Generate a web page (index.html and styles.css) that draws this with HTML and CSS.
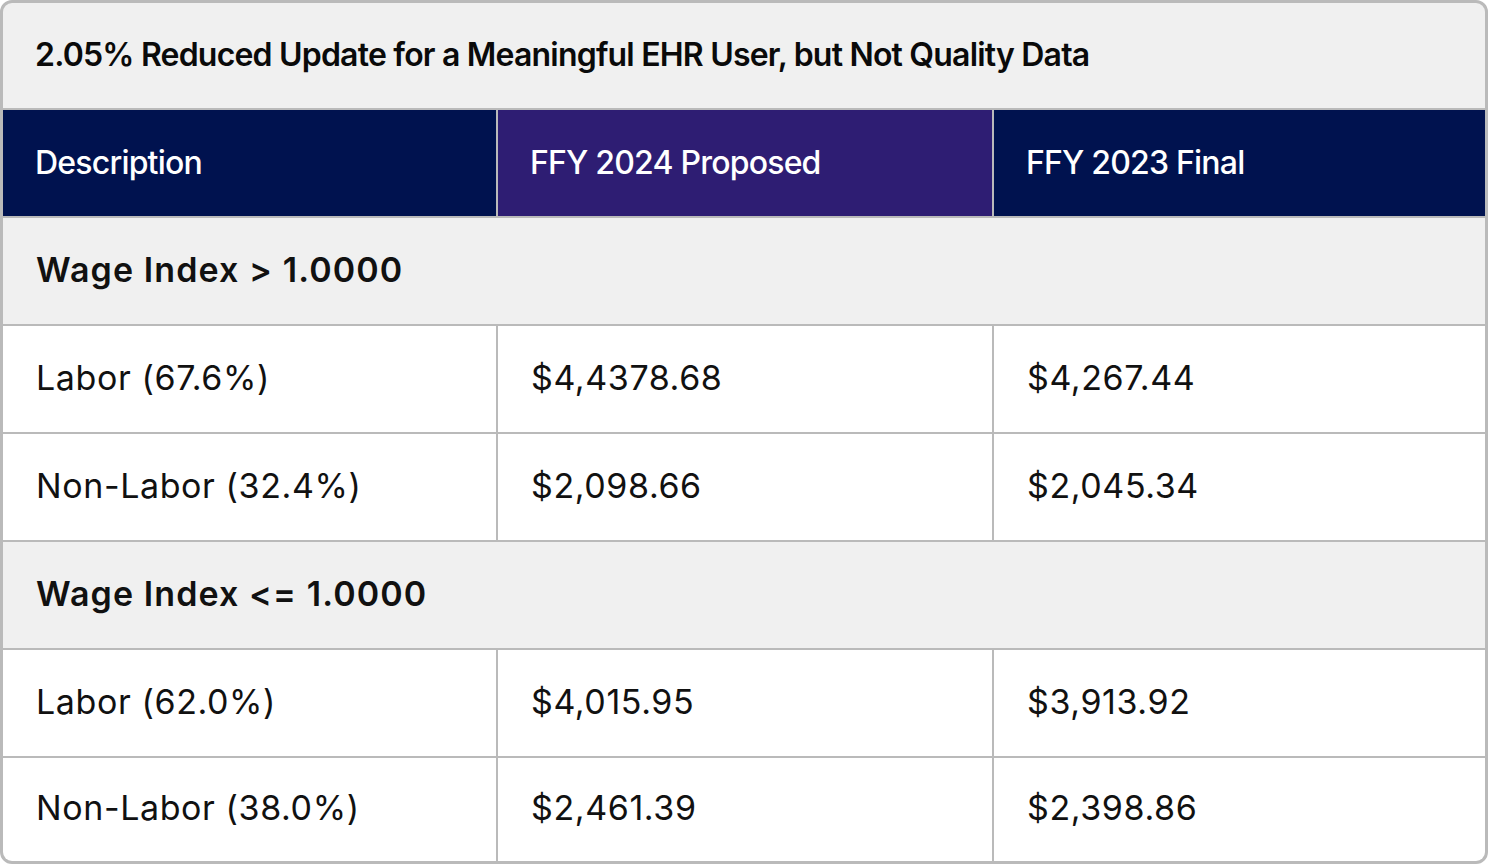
FILE: index.html
```html
<!DOCTYPE html>
<html>
<head>
<meta charset="utf-8">
<link rel="stylesheet" href="styles.css">
</head>
<body>
<div class="table">
  <div class="cell title">2.05% Reduced Update for a Meaningful EHR User, but Not Quality Data</div>
  <div class="cell head">Description</div>
  <div class="cell head alt">FFY 2024 Proposed</div>
  <div class="cell head">FFY 2023 Final</div>
  <div class="cell section">Wage Index &gt; 1.0000</div>
  <div class="cell">Labor (67.6%)</div>
  <div class="cell">$4,4378.68</div>
  <div class="cell">$4,267.44</div>
  <div class="cell">Non-Labor (32.4%)</div>
  <div class="cell">$2,098.66</div>
  <div class="cell">$2,045.34</div>
  <div class="cell section">Wage Index &lt;= 1.0000</div>
  <div class="cell">Labor (62.0%)</div>
  <div class="cell">$4,015.95</div>
  <div class="cell">$3,913.92</div>
  <div class="cell">Non-Labor (38.0%)</div>
  <div class="cell">$2,461.39</div>
  <div class="cell">$2,398.86</div>
</div>
</body>
</html>
```
FILE: styles.css
```css
* { box-sizing: border-box; }
html, body { margin: 0; padding: 0; background: #ffffff; }
body { width: 1488px; height: 864px; overflow: hidden; }
.table {
  width: 1488px;
  height: 864px;
  border: 3px solid #bababa;
  border-radius: 12px;
  overflow: hidden;
  background: #bababa;
  display: grid;
  grid-template-columns: 493px 494px 1fr;
  grid-template-rows: 105px repeat(6, 106px) 1fr;
  gap: 2px;
  font-family: Inter, "Noto Sans", sans-serif;
}
.cell {
  background: #ffffff;
  display: flex;
  align-items: center;
  padding-left: 33px;
  padding-bottom: 4px;
  font-size: 34px;
  color: #111111;
  letter-spacing: 0.6px;
}
.title {
  grid-column: 1 / -1;
  background: #f0f0f0;
  font-size: 32px;
  font-weight: 600;
  letter-spacing: -0.8px;
  color: #0a0a0a;
  padding-left: 32px;
  padding-bottom: 3px;
}
.head {
  background: #00124f;
  color: #ffffff;
  font-size: 32px;
  font-weight: 500;
  letter-spacing: -0.8px;
  padding-left: 32px;
  padding-bottom: 2px;
}
.head.alt { background: #2e1d73; }
.section {
  grid-column: 1 / -1;
  background: #f0f0f0;
  font-weight: 600;
  font-size: 34px;
  letter-spacing: 1.1px;
}
```
